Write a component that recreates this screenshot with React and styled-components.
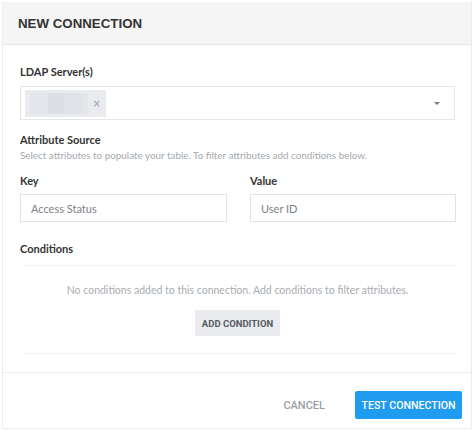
import React from 'react'
import styled, { createGlobalStyle } from 'styled-components'

const GlobalStyle = createGlobalStyle`
  html, body {
    margin: 0;
    padding: 0;
    background: #fff;
  }
  body {
    font-family: Lato, "Noto Sans", sans-serif;
    color: #333;
  }
`;

const Modal = styled.div`
  margin: 2px;
  width: 470px;
  height: 427px;
  box-sizing: border-box;
  border: 1px solid #ececec;
  border-top: none;
  display: flex;
  flex-direction: column;
`;

const Header = styled.div`
  height: 42px;
  background: #f5f5f5;
  border-bottom: 1px solid #e6e6e6;
  display: flex;
  align-items: center;
  padding-left: 15px;
  font-family: "Liberation Sans", Arial, sans-serif;
  font-size: 13.3px;
  font-weight: bold;
  color: #333;
`;

const Body = styled.div`
  padding: 20px 16px 18px 17px;
  display: flex;
  flex-direction: column;
`;

const Label = styled.div`
  font-size: 11px;
  font-weight: 700;
  color: #333;
  line-height: 14px;
  margin-bottom: ${p => p.$gap || 7}px;
`;

const Hint = styled.div`
  font-size: 9.9px;
  color: #a5a9ae;
  line-height: 13px;
  margin-bottom: 12px;
`;

const Select = styled.div`
  height: 34px;
  box-sizing: border-box;
  border: 1px solid #e6e6e6;
  display: flex;
  align-items: center;
  padding: 0 4px;
  margin-bottom: 13px;
`;

const Chip = styled.div`
  width: 81px;
  height: 27px;
  background: #e9ebee;
  display: flex;
  align-items: center;
  padding-left: 5px;
  box-sizing: border-box;
`;

const Blur = styled.div`
  width: ${p => p.$w}px;
  height: 21px;
  background: ${p => p.$c};
`;

const ChipClose = styled.span`
  margin-left: auto;
  margin-right: 5px;
  font-size: 10px;
  color: #9a9ea3;
  font-family: "DejaVu Sans", sans-serif;
`;

const Caret = styled.div`
  margin-left: auto;
  margin-right: 10px;
  width: 0;
  height: 0;
  border-left: 3px solid transparent;
  border-right: 3px solid transparent;
  border-top: 3px solid #777;
`;

const FieldRow = styled.div`
  display: grid;
  grid-template-columns: 207px 206px;
  column-gap: 23px;
  margin-bottom: 20px;
`;

const Field = styled.div`
  display: flex;
  flex-direction: column;
`;

const Input = styled.div`
  height: 28px;
  box-sizing: border-box;
  border: 1px solid #e3e3e3;
  display: flex;
  align-items: center;
  padding-left: 10px;
  font-size: 11px;
  color: #7d8186;
`;

const Divider = styled.div`
  height: 1px;
  background: #f0f0f0;
  margin-left: 5px;
`;

const Empty = styled.div`
  display: flex;
  flex-direction: column;
  align-items: center;
  padding: 18px 0 17px;
`;

const EmptyText = styled.div`
  font-size: 10.5px;
  color: #a9adb2;
  line-height: 13px;
  margin-bottom: 13px;
`;

const AddButton = styled.button`
  width: 85px;
  height: 26px;
  border: none;
  background: #e9ebee;
  font-family: Roboto, sans-serif;
  font-size: 9.5px;
  font-weight: 700;
  color: #555a60;
  cursor: pointer;
  padding: 0;
`;

const Footer = styled.div`
  border-top: 1px solid #ececec;
  display: flex;
  justify-content: flex-end;
  align-items: center;
  gap: 30px;
  padding: 18px 9px 0 0;
`;

const CancelButton = styled.button`
  border: none;
  background: none;
  font-family: Roboto, sans-serif;
  font-size: 11px;
  font-weight: 500;
  color: #9b9fa4;
  padding: 0;
  cursor: pointer;
`;

const PrimaryButton = styled.button`
  width: 107px;
  height: 28px;
  border: none;
  border-radius: 2px;
  background: #1f9bf0;
  color: #fff;
  font-family: Roboto, sans-serif;
  font-size: 10.6px;
  font-weight: 500;
  padding: 0;
  cursor: pointer;
`;

export default function App() {
  return (
    <>
      <GlobalStyle />
      <Modal>
        <Header>NEW CONNECTION</Header>
        <Body>
          <Label $gap={7}>LDAP Server(s)</Label>
          <Select>
            <Chip>
              <Blur $w={18} $c="#e3e6ea" />
              <Blur $w={16} $c="#dcdfe3" />
              <Blur $w={18} $c="#e0e3e7" />
              <Blur $w={6} $c="#e4e7ea" />
              <ChipClose>×</ChipClose>
            </Chip>
            <Caret />
          </Select>
          <Label $gap={2}>Attribute Source</Label>
          <Hint>Select attributes to populate your table. To filter attributes add conditions below.</Hint>
          <FieldRow>
            <Field>
              <Label $gap={6}>Key</Label>
              <Input>Access Status</Input>
            </Field>
            <Field>
              <Label $gap={6}>Value</Label>
              <Input>User ID</Input>
            </Field>
          </FieldRow>
          <Label $gap={9}>Conditions</Label>
          <Divider />
          <Empty>
            <EmptyText>No conditions added to this connection. Add conditions to filter attributes.</EmptyText>
            <AddButton>ADD CONDITION</AddButton>
          </Empty>
          <Divider />
        </Body>
        <Footer>
          <CancelButton>CANCEL</CancelButton>
          <PrimaryButton>TEST CONNECTION</PrimaryButton>
        </Footer>
      </Modal>
    </>
  )
}
